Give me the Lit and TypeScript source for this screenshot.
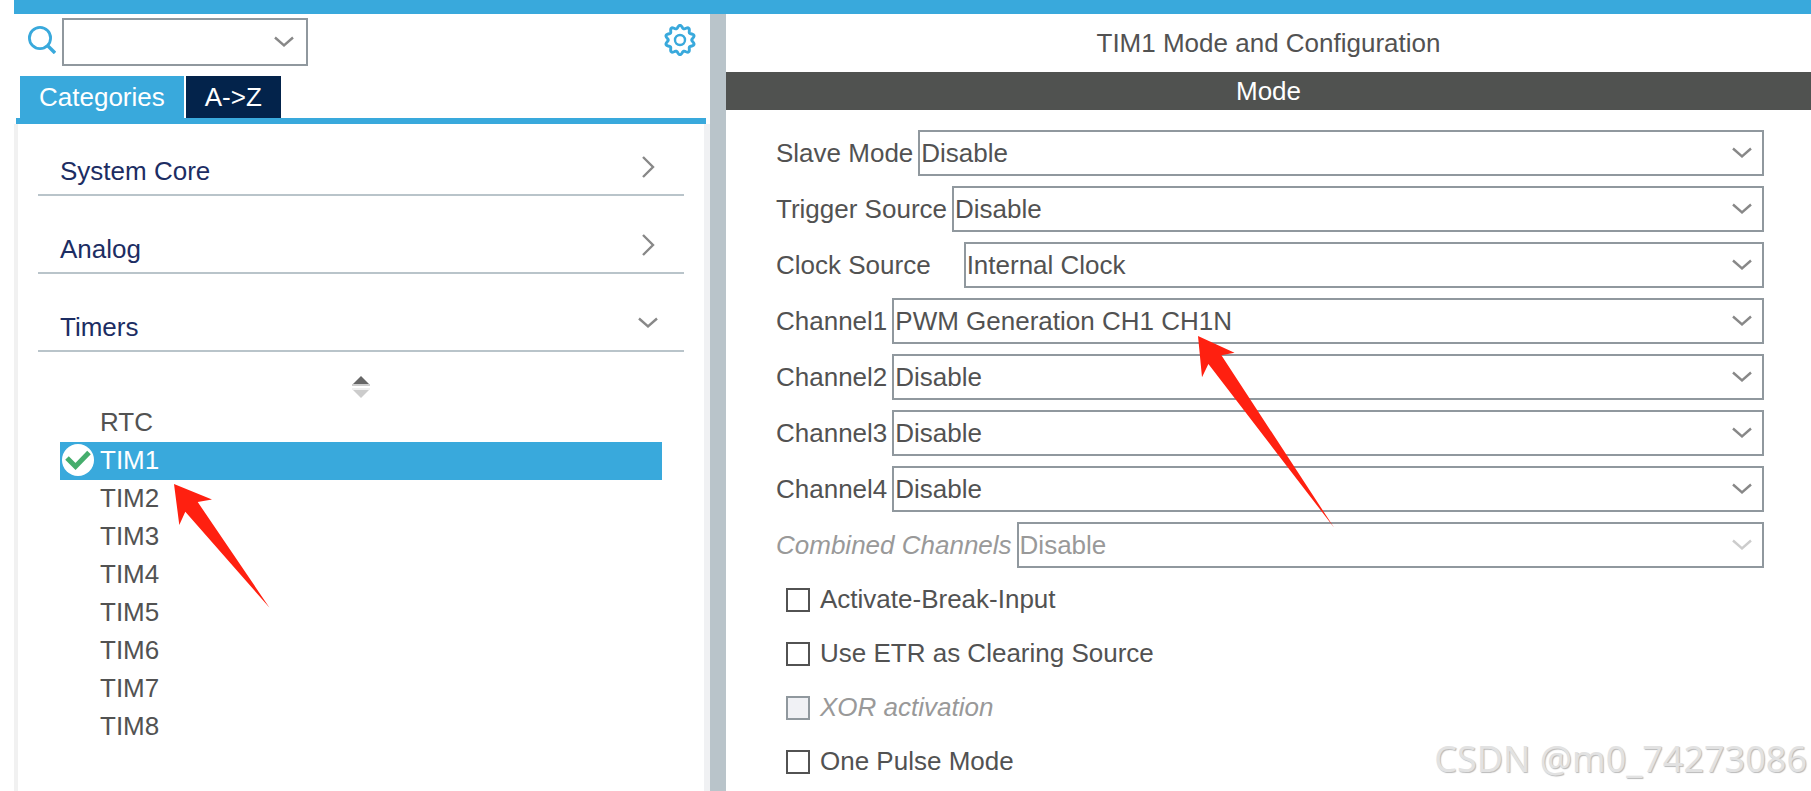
import { LitElement, html, css, svg } from "lit";
import { customElement, property, state } from "lit/decorators.js";
import { classMap } from "lit/directives/class-map.js";

interface Field {
  id: string;
  label: string;
  value: string;
  disabled?: boolean;
  wide?: boolean;
  marked?: boolean;
}

interface Option {
  id: string;
  label: string;
  disabled?: boolean;
}

const FIELDS: Field[] = [
  { id: "slave", label: "Slave Mode", value: "Disable" },
  { id: "trigger", label: "Trigger Source", value: "Disable" },
  { id: "clock", label: "Clock Source", value: "Internal Clock", wide: true },
  { id: "ch1", label: "Channel1", value: "PWM Generation CH1 CH1N", marked: true },
  { id: "ch2", label: "Channel2", value: "Disable" },
  { id: "ch3", label: "Channel3", value: "Disable" },
  { id: "ch4", label: "Channel4", value: "Disable" },
  { id: "combined", label: "Combined Channels", value: "Disable", disabled: true },
];

const OPTIONS: Option[] = [
  { id: "break", label: "Activate-Break-Input" },
  { id: "etr", label: "Use ETR as Clearing Source" },
  { id: "xor", label: "XOR activation", disabled: true },
  { id: "pulse", label: "One Pulse Mode" },
];

const TIMERS = ["RTC", "TIM1", "TIM2", "TIM3", "TIM4", "TIM5", "TIM6", "TIM7", "TIM8"];

/* Ten-toothed outline, sampled around the centre of a 32 x 32 box. */
const gearPath = (() => {
  const points: string[] = [];
  for (let i = 0; i < 120; i++) {
    const a = (i / 120) * Math.PI * 2;
    const r = 13.2 + 1.5 * Math.cos(10 * a);
    points.push(`${(16 + r * Math.sin(a)).toFixed(2)} ${(16 - r * Math.cos(a)).toFixed(2)}`);
  }
  return `M${points.join("L")}Z`;
})();

const down = svg`<path d="M1 6.5 L10 14.5 L19 6.5" fill="none" stroke="currentColor" stroke-width="2.4"/>`;
const right = svg`<path d="M5 1 L15 11 L5 21" fill="none" stroke="currentColor" stroke-width="2.4"/>`;

const shared = css`
  * {
    box-sizing: border-box;
  }
  button,
  input,
  select {
    font: inherit;
    color: inherit;
    margin: 0;
    border-radius: 0;
  }
  button {
    border: 0;
    padding: 0;
    background: none;
    text-align: left;
    cursor: pointer;
  }
  svg {
    display: block;
    flex: none;
  }
  .arrow {
    position: absolute;
    z-index: 2;
    fill: #ff2010;
    pointer-events: none;
  }
`;

@customElement("category-panel")
export class CategoryPanel extends LitElement {
  @state() private selected = "TIM1";

  static styles = [
    shared,
    css`
      :host {
        display: flex;
        flex-direction: column;
        min-width: 0;
      }
      .tools {
        display: flex;
        align-items: center;
        gap: 6px;
        padding: 4px 14px 10px;
        color: #39a9dc;
      }
      .tool-icon {
        margin-bottom: 4px;
      }
      .search {
        display: grid;
        align-items: center;
        width: 246px;
        margin-right: auto;
        color: #888888;
      }
      .search input {
        grid-area: 1 / 1;
        width: 100%;
        height: 48px;
        padding: 0 40px 0 4px;
        border: 2px solid #90989e;
        background: #fff;
        color: #525252;
      }
      .search svg {
        grid-area: 1 / 1;
        justify-self: end;
        margin-right: 14px;
        pointer-events: none;
      }
      .tabs {
        display: flex;
        gap: 2px;
        margin: 0 4px 0 2px;
        padding-left: 4px;
        border-bottom: 6px solid #39a9dc;
      }
      .tab {
        height: 42px;
        padding: 0 19px;
        background: #03234b;
        color: #fff;
      }
      .tab.active {
        background: #39a9dc;
      }
      .body {
        flex: 1;
        padding: 32px 20px 0;
        border-left: 4px solid #f1f1f1;
        border-right: 6px solid #f0f1f3;
      }
      .groups {
        display: flex;
        flex-direction: column;
        gap: 38px;
      }
      .group {
        display: flex;
        justify-content: space-between;
        align-items: flex-start;
        width: 100%;
        padding: 0 26px 8px 22px;
        border-bottom: 2px solid #b9c4ca;
        color: #1c2d63;
        line-height: 30px;
      }
      .group svg {
        color: #888888;
      }
      .sort {
        display: block;
        margin: 24px auto 6px;
      }
      .list {
        margin: 0 22px;
        padding: 0;
        list-style: none;
      }
      .item {
        position: relative;
      }
      .entry {
        display: flex;
        align-items: center;
        gap: 6px;
        width: 100%;
        height: 38px;
        padding: 0 0 2px 2px;
        color: #525252;
      }
      .entry.selected {
        background: #39a9dc;
        color: #fff;
      }
      .mark {
        width: 32px;
        height: 32px;
      }
      .arrow {
        left: 114px;
        top: 42px;
      }
    `,
  ];

  render() {
    return html`
      <div class="tools">
        <svg class="tool-icon" width="28" height="28" viewBox="0 0 28 28" fill="none" stroke="#39a9dc">
          <circle cx="12" cy="12" r="10.6" stroke-width="2.8" />
          <path d="M19.5 19.5 L27 27" stroke-width="3.4" />
        </svg>
        <div class="search">
          <input type="text" role="combobox" aria-label="Search" aria-expanded="false" />
          <svg width="20" height="22" viewBox="0 0 20 22">${down}</svg>
        </div>
        <button class="tool-icon" aria-label="Settings">
          <svg width="32" height="32" viewBox="0 0 32 32" fill="none" stroke="#39a9dc">
            <path d=${gearPath} stroke-width="2.9" />
            <circle cx="16" cy="16" r="5" stroke-width="2.4" />
          </svg>
        </button>
      </div>
      <div class="tabs" role="tablist">
        <button class="tab active" role="tab" aria-selected="true">Categories</button>
        <button class="tab" role="tab" aria-selected="false">A-&gt;Z</button>
      </div>
      <div class="body" role="tabpanel">
        <div class="groups">
          ${["System Core", "Analog", "Timers"].map((name) => {
            const open = name === "Timers";
            return html`<button class="group" aria-expanded=${open ? "true" : "false"}>
              ${name}<svg width="20" height="22" viewBox="0 0 20 22">${open ? down : right}</svg>
            </button>`;
          })}
        </div>
        <button class="sort" aria-label="Sort">
          <svg width="18" height="22" viewBox="0 0 18 22">
            <path d="M9 0 L17 8 H1 Z" fill="#666666" />
            <path d="M0 8 H18 V10 H0 Z" fill="#cccccc" />
            <path d="M0 12 H18 V14 H0 Z" fill="#f0f0f0" />
            <path d="M1 14 H17 L9 22 Z" fill="#cccccc" />
          </svg>
        </button>
        <ul class="list">
          ${TIMERS.map((name) => {
            const selected = name === this.selected;
            return html`<li class="item">
              <button class=${classMap({ entry: true, selected })} @click=${() => (this.selected = name)}>
                <span class="mark"
                  >${selected
                    ? html`<svg width="32" height="32" viewBox="0 0 32 32">
                        <circle cx="16" cy="16" r="16" fill="#fff" />
                        <path d="M5 14 L13.5 22.5 L27 8.5" fill="none" stroke="#45ad6c" stroke-width="5" />
                      </svg>`
                    : ""}</span
                >${name}
              </button>
              ${name === "TIM1"
                ? html`<svg class="arrow" width="96" height="124" viewBox="0 0 96 124">
                    <path d="M0 0 L38 15.5 L23.7 18 L95.5 123.7 L11.3 27.7 L5.3 41 Z" />
                  </svg>`
                : ""}
            </li>`;
          })}
        </ul>
      </div>
    `;
  }
}

@customElement("mode-field")
export class ModeField extends LitElement {
  @property({ attribute: false }) field!: Field;

  static styles = [
    shared,
    css`
      :host {
        display: block;
      }
      .row {
        position: relative;
        display: flex;
        align-items: center;
        gap: 5px;
      }
      .row.disabled {
        color: #999999;
      }
      .row.disabled label {
        font-style: italic;
      }
      label {
        flex: none;
      }
      .wide label {
        margin-right: 28px;
      }
      .box {
        flex: 1;
        display: grid;
        align-items: center;
        min-width: 0;
      }
      select {
        grid-area: 1 / 1;
        appearance: none;
        width: 100%;
        height: 46px;
        padding: 0 36px 0 1px;
        border: 2px solid #90989e;
        background: #fff;
      }
      select:disabled {
        opacity: 1;
      }
      .box svg {
        grid-area: 1 / 1;
        justify-self: end;
        margin-right: 12px;
        color: #888888;
        pointer-events: none;
      }
      .disabled .box svg {
        color: #cccccc;
      }
      .arrow {
        left: 422px;
        top: 38px;
      }
    `,
  ];

  render() {
    const f = this.field;
    return html`<div class=${classMap({ row: true, disabled: !!f.disabled, wide: !!f.wide })}>
      <label for=${f.id}>${f.label}</label>
      <div class="box">
        <select id=${f.id} ?disabled=${!!f.disabled}>
          <option>${f.value}</option>
        </select>
        <svg width="20" height="22" viewBox="0 0 20 22">${down}</svg>
      </div>
      ${f.marked
        ? html`<svg class="arrow" width="137" height="192" viewBox="0 0 137 192">
            <path d="M0 0 L36.5 16.7 L23.4 19.3 L136 191.5 L10.4 28 L4 41.3 Z" />
          </svg>`
        : ""}
    </div>`;
  }
}

@customElement("mode-panel")
export class ModePanel extends LitElement {
  static styles = [
    shared,
    css`
      :host {
        display: block;
        min-width: 0;
      }
      h1,
      h2 {
        margin: 0;
        font: inherit;
        text-align: center;
      }
      h1 {
        line-height: 58px;
      }
      h2 {
        line-height: 38px;
        background: #505250;
        color: #fff;
      }
      .fields {
        display: grid;
        gap: 10px;
        padding: 20px 47px 5px 50px;
      }
      .options {
        padding-left: 60px;
      }
      .option {
        display: flex;
        align-items: center;
        gap: 10px;
        height: 54px;
      }
      .option.disabled {
        color: #999999;
        font-style: italic;
      }
      .option label {
        padding-bottom: 2px;
      }
      input {
        appearance: none;
        width: 24px;
        height: 24px;
        border: 2px solid #525252;
        background: #fff;
      }
      input:checked {
        background: #39a9dc;
      }
      input:disabled {
        border-color: #90989e;
        background: #f0f1f5;
      }
    `,
  ];

  render() {
    return html`
      <h1>TIM1 Mode and Configuration</h1>
      <h2>Mode</h2>
      <div class="fields">${FIELDS.map((f) => html`<mode-field .field=${f}></mode-field>`)}</div>
      <div class="options">
        ${OPTIONS.map(
          (o) => html`<div class=${classMap({ option: true, disabled: !!o.disabled })}>
            <input type="checkbox" id=${o.id} ?disabled=${!!o.disabled} />
            <label for=${o.id}>${o.label}</label>
          </div>`
        )}
      </div>
    `;
  }
}

@customElement("app-root")
export class AppRoot extends LitElement {
  static styles = css`
    :host {
      position: relative;
      display: flex;
      flex-direction: column;
      box-sizing: border-box;
      min-height: 100vh;
      padding-left: 14px;
      background: #fff;
      color: #525252;
      font-family: "Liberation Sans", Arial, sans-serif;
      font-size: 26px;
      line-height: 30px;
    }
    .top {
      height: 14px;
      background: #39a9dc;
    }
    .columns {
      flex: 1;
      display: grid;
      grid-template-columns: minmax(0, 696fr) 16px minmax(0, 1085fr);
    }
    .splitter {
      background: #b9c4ca;
    }
    .watermark {
      position: absolute;
      right: 4px;
      bottom: 12px;
      color: #e2e2e2;
      font-family: "Noto Sans", "Open Sans", sans-serif;
      font-size: 36px;
      line-height: 40px;
      text-shadow: 1px 1px 1px #b8b8b8;
      pointer-events: none;
    }
  `;

  render() {
    return html`
      <div class="top"></div>
      <div class="columns">
        <category-panel></category-panel>
        <div class="splitter"></div>
        <mode-panel></mode-panel>
      </div>
      <div class="watermark">CSDN @m0_74273086</div>
    `;
  }
}
